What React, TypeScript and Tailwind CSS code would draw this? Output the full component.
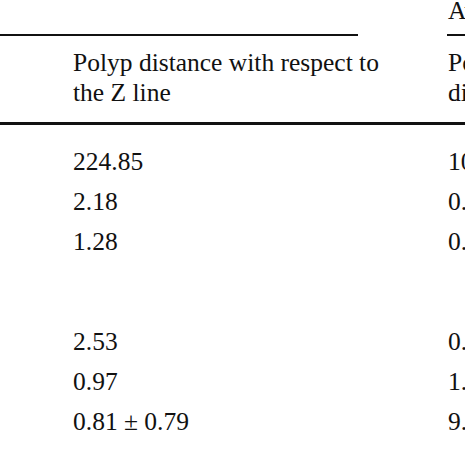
/**
 * PolypTable — 표 일부 (잘린 스크린샷 재현)
 */
const upper = [
    { mid: '224.85', right: '100.00' },
    { mid: '2.18', right: '0.54' },
    { mid: '1.28', right: '0.36' },
];

const lower = [
    { mid: '2.53', right: '0.62' },
    { mid: '0.97', right: '1.12' },
    { mid: '0.81 ± 0.79', right: '9.40 ± 2.15' },
];

function DataRow({ mid, right }: { mid: string; right: string }) {
    return (
        <div className="flex leading-[40px] h-[40px] whitespace-nowrap">
            <div className="w-[73px] shrink-0" />
            <div className="w-[375px] shrink-0">{mid}</div>
            <div className="shrink-0">{right}</div>
        </div>
    );
}

export default function App() {
    return (
        <div
            className="w-[465px] h-[465px] overflow-hidden bg-white text-[#111] text-[25.5px]"
            style={{ fontFamily: '"Liberation Serif", "Times New Roman", serif' }}
        >
            {/* 상단 그룹 헤더 */}
            <div className="flex h-[34px] whitespace-nowrap">
                <div className="w-[448px] shrink-0" />
                <div className="leading-[30px] -mt-[4px]">Average</div>
            </div>
            <div className="flex h-[2px]">
                <div className="w-[358px] shrink-0 bg-[#111]" />
                <div className="w-[89px] shrink-0" />
                <div className="flex-1 bg-[#111]" />
            </div>

            {/* 열 제목 */}
            <div className="flex pt-[12px] pb-[14px] leading-[30px] whitespace-nowrap">
                <div className="w-[73px] shrink-0" />
                <div className="w-[375px] shrink-0">
                    Polyp distance with respect to
                    <br />
                    the Z line
                </div>
                <div className="shrink-0">
                    Polyp
                    <br />
                    distance
                </div>
            </div>
            <div className="h-[3px] bg-[#111]" />

            {/* 데이터 */}
            <div className="pt-[17px]">
                {upper.map((r) => (
                    <DataRow key={r.mid} {...r} />
                ))}
                <div className="h-[60px]" />
                {lower.map((r) => (
                    <DataRow key={r.mid} {...r} />
                ))}
            </div>
        </div>
    );
}
